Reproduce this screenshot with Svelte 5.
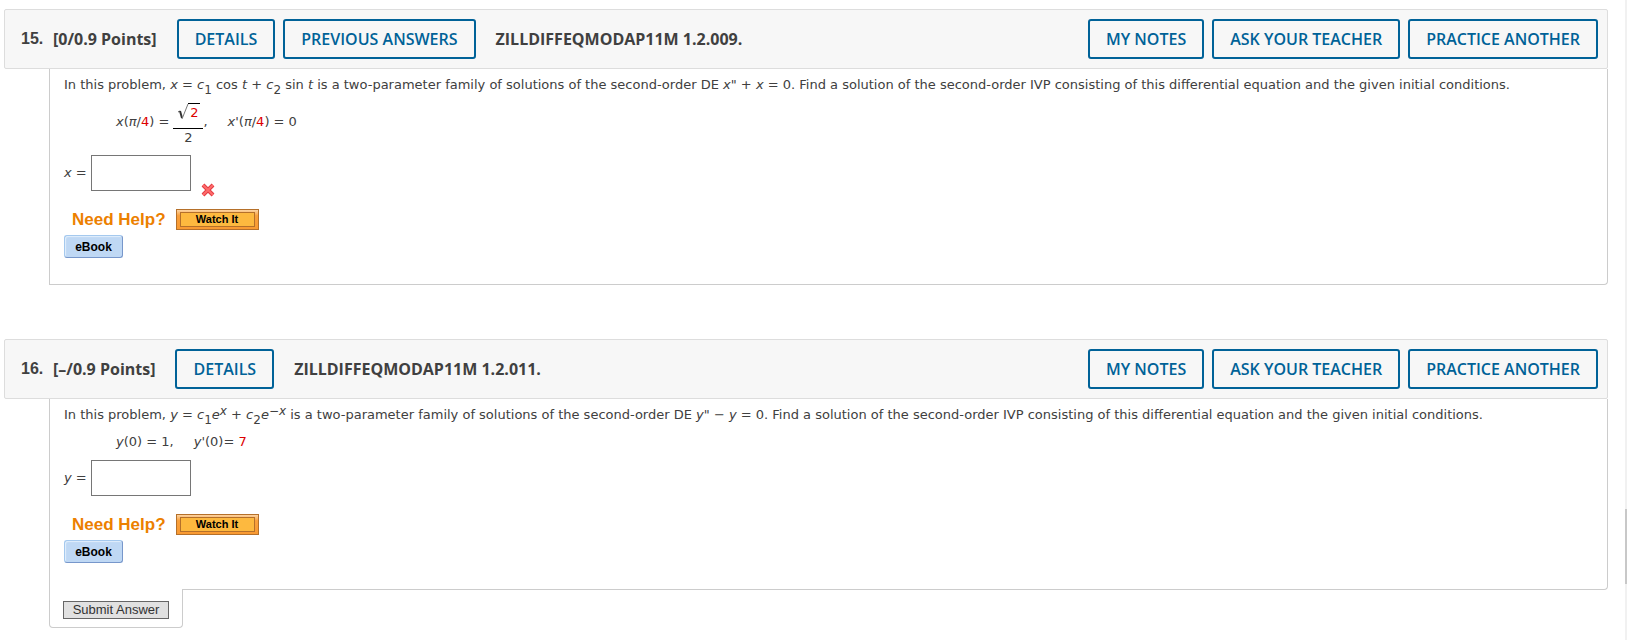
<script lang="ts">
  let answerX = "";
  let answerY = "";

  const actions = ["My Notes", "Ask Your Teacher", "Practice Another"];
</script>

{#snippet header(num: number, points: string, left: string[], code: string)}
  <header class="question-header">
    <h2 class="question-num">{num}.</h2>
    <span class="points">[{points} Points]</span>
    <div class="buttons">
      {#each left as label}
        <button type="button" class="outline-button">{label}</button>
      {/each}
    </div>
    <span class="code">{code}</span>
    <div class="buttons right">
      {#each actions as label}
        <button type="button" class="outline-button">{label}</button>
      {/each}
    </div>
  </header>
{/snippet}

{#snippet help()}
  <div class="help">
    <div class="help-row">
      <span class="need-help">Need Help?</span>
      <button type="button" class="watch-button"><span>Watch It</span></button>
    </div>
    <button type="button" class="ebook-button">eBook</button>
  </div>
{/snippet}

<div class="page">
  <main>
    <section>
      {@render header(15, "0/0.9", ["Details", "Previous Answers"], "ZILLDIFFEQMODAP11M 1.2.009.")}
      <div class="question-body">
        <p>
          In this problem, <i>x</i> = <i>c</i><sub>1</sub> cos <i>t</i> + <i>c</i><sub>2</sub> sin <i>t</i>
          is a two-parameter family of solutions of the second-order DE <i>x"</i> + <i>x</i> = 0. Find a
          solution of the second-order IVP consisting of this differential equation and the given initial
          conditions.
        </p>
        <div class="conditions tall">
          <span><i>x</i>(<i>π</i>/<b>4</b>) =</span>
          <span class="fraction">
            <span class="root">
              <svg width="12" height="18" viewBox="0 0 12 18" aria-hidden="true">
                <path d="M1 9l2-1" fill="none" stroke="#555" />
                <path d="M3 8l2 7" fill="none" stroke="#333" stroke-width="2" />
                <path d="M5 16L11 1" fill="none" stroke="#777" />
                <path d="M11 0h1v1h-1z" fill="#000" />
              </svg>
              <b>2</b>
            </span>
            <span class="denominator">2</span>
          </span>
          <span>,</span>
          <span class="second"><i>x</i>'(<i>π</i>/<b>4</b>) = 0</span>
        </div>
        <div class="answer">
          <label for="answer-x"><i>x</i> =</label>
          <input id="answer-x" type="text" bind:value={answerX} />
          <svg class="wrong" width="14" height="14" viewBox="0 0 14 14" role="img" aria-label="Incorrect">
            <path d="M2 2l10 10M12 2L2 12" fill="none" stroke="#e23c42" stroke-width="4" />
            <path d="M2 2l10 10M12 2L2 12" fill="none" stroke="#ff6b6b" stroke-width="2" />
          </svg>
        </div>
        {@render help()}
      </div>
    </section>

    <section>
      {@render header(16, "–/0.9", ["Details"], "ZILLDIFFEQMODAP11M 1.2.011.")}
      <div class="question-body">
        <p>
          In this problem, <i>y</i> = <i>c</i><sub>1</sub><i>e</i><sup><i>x</i></sup> +
          <i>c</i><sub>2</sub><i>e</i><sup>−<i>x</i></sup>
          is a two-parameter family of solutions of the second-order DE <i>y"</i> − <i>y</i> = 0. Find a
          solution of the second-order IVP consisting of this differential equation and the given initial
          conditions.
        </p>
        <div class="conditions">
          <span><i>y</i>(0) = 1,</span>
          <span class="second"><i>y</i>'(0)= <b>7</b></span>
        </div>
        <div class="answer">
          <label for="answer-y"><i>y</i> =</label>
          <input id="answer-y" type="text" bind:value={answerY} />
        </div>
        {@render help()}
      </div>
      <div class="submit-tab">
        <button type="submit" class="submit-button">Submit Answer</button>
      </div>
    </section>
  </main>
  <div class="scroll-track"><div class="scroll-thumb"></div></div>
</div>

<style>
  :global(body) {
    margin: 0;
    background: #fff;
  }

  .page {
    display: flex;
    min-height: 100vh;
    color: #404040;
    font-family: Verdana, "DejaVu Sans", sans-serif;
    font-size: 13px;
    line-height: 18px;
  }

  .page * {
    box-sizing: border-box;
  }

  main {
    flex: 1;
    min-width: 0;
    padding: 9px 17px 0 4px;
  }

  section {
    margin-bottom: 54px;
  }

  section:last-child {
    margin-bottom: 0;
  }

  .question-header {
    display: flex;
    align-items: center;
    height: 60px;
    padding: 0 9px 0 16px;
    background: #f7f7f7;
    border: 1px solid #ddd;
    border-radius: 2px;
    font-family: "Open Sans", sans-serif;
    font-size: 16px;
    font-weight: 700;
    white-space: nowrap;
  }

  .question-num {
    width: 32px;
    margin: 0;
    font-family: Arial, "Liberation Sans", sans-serif;
    font-size: 16px;
  }

  .points {
    margin-right: 20px;
  }

  .buttons {
    display: flex;
    gap: 8px;
  }

  .code {
    margin-left: 20px;
  }

  .right {
    margin-left: auto;
  }

  .outline-button {
    height: 40px;
    padding: 0 16px;
    background: none;
    border: 2px solid #006298;
    border-radius: 3px;
    color: #006298;
    font-family: inherit;
    font-size: 16px;
    font-weight: 600;
    text-transform: uppercase;
    cursor: pointer;
  }

  .question-body {
    margin-left: 45px;
    padding: 7px 14px 26px;
    border: 1px solid #ccc;
    border-top: none;
    border-radius: 0 0 4px 0;
  }

  p {
    margin: 0;
  }

  i {
    font-style: italic;
  }

  b {
    color: #d00;
    font-weight: 400;
  }

  sub,
  sup {
    font-size: 12px;
    line-height: 0;
  }

  sub {
    vertical-align: -5px;
  }

  sup {
    vertical-align: 4px;
  }

  .conditions {
    display: flex;
    align-items: center;
    height: 36px;
    padding-left: 52px;
  }

  .tall {
    height: 56px;
    margin-bottom: 5px;
  }

  .second {
    margin-left: 20px;
  }

  .fraction {
    display: flex;
    flex-direction: column;
    align-items: center;
    width: 30px;
    margin-left: 4px;
    padding-top: 6px;
  }

  .root {
    display: flex;
    justify-content: center;
    width: 100%;
    padding-bottom: 7px;
    border-bottom: 1px solid #000;
  }

  .root b {
    height: 18px;
    padding: 0 1px;
    border-top: 1px solid #000;
  }

  .denominator {
    height: 18px;
  }

  .answer {
    display: flex;
    align-items: center;
    gap: 4px;
  }

  input {
    width: 100px;
    height: 36px;
    padding: 4px;
    border: 1px solid #767676;
    background: #fff;
    font: inherit;
  }

  .wrong {
    align-self: flex-end;
    margin: 0 0 -6px 6px;
  }

  .help {
    padding-top: 18px;
  }

  .help-row {
    display: flex;
    align-items: center;
    gap: 10px;
    padding-left: 8px;
    margin-bottom: 5px;
  }

  .need-help {
    color: #ec8000;
    font-family: Arial, "Liberation Sans", sans-serif;
    font-size: 17px;
    font-weight: 700;
  }

  .watch-button {
    width: 83px;
    height: 21px;
    padding: 2px 3px;
    background: linear-gradient(#fcd3a2, #f9a03c 30%, #f99a32);
    border: 1px solid #b5702a;
    color: #000;
    font-family: Arial, "Liberation Sans", sans-serif;
    font-size: 11px;
    font-weight: 700;
    line-height: 13px;
    cursor: pointer;
  }

  .watch-button span {
    display: block;
    background: #fdb93f;
    border: 1px solid #b5702a;
  }

  .ebook-button {
    display: block;
    width: 59px;
    height: 23px;
    padding: 0;
    background: #bfd8f4;
    border: 1px solid #a5c9ee;
    border-right-color: #7797cb;
    border-bottom-color: #7797cb;
    border-radius: 3px;
    box-shadow: inset 1px 1px 1px #e2effc;
    color: #000;
    font-family: Arial, "Liberation Sans", sans-serif;
    font-size: 12px;
    font-weight: 700;
    cursor: pointer;
  }

  .submit-tab {
    width: 134px;
    margin: -1px 0 0 45px;
    padding: 12px 13px 8px;
    background: #fff;
    border: 1px solid #ccc;
    border-top: none;
    border-radius: 0 0 4px 4px;
  }

  .submit-button {
    display: block;
    width: 106px;
    height: 18px;
    padding: 0;
    background: #e1e1e1;
    border: 1px solid #666;
    color: #333;
    font-family: Arial, "Liberation Sans", sans-serif;
    font-size: 13px;
    line-height: 16px;
    cursor: pointer;
  }

  .scroll-track {
    width: 2px;
    padding-top: 509px;
    background: #f1f1f1;
    box-sizing: border-box;
  }

  .scroll-thumb {
    height: 75px;
    background: #c8c8c8;
  }
</style>
